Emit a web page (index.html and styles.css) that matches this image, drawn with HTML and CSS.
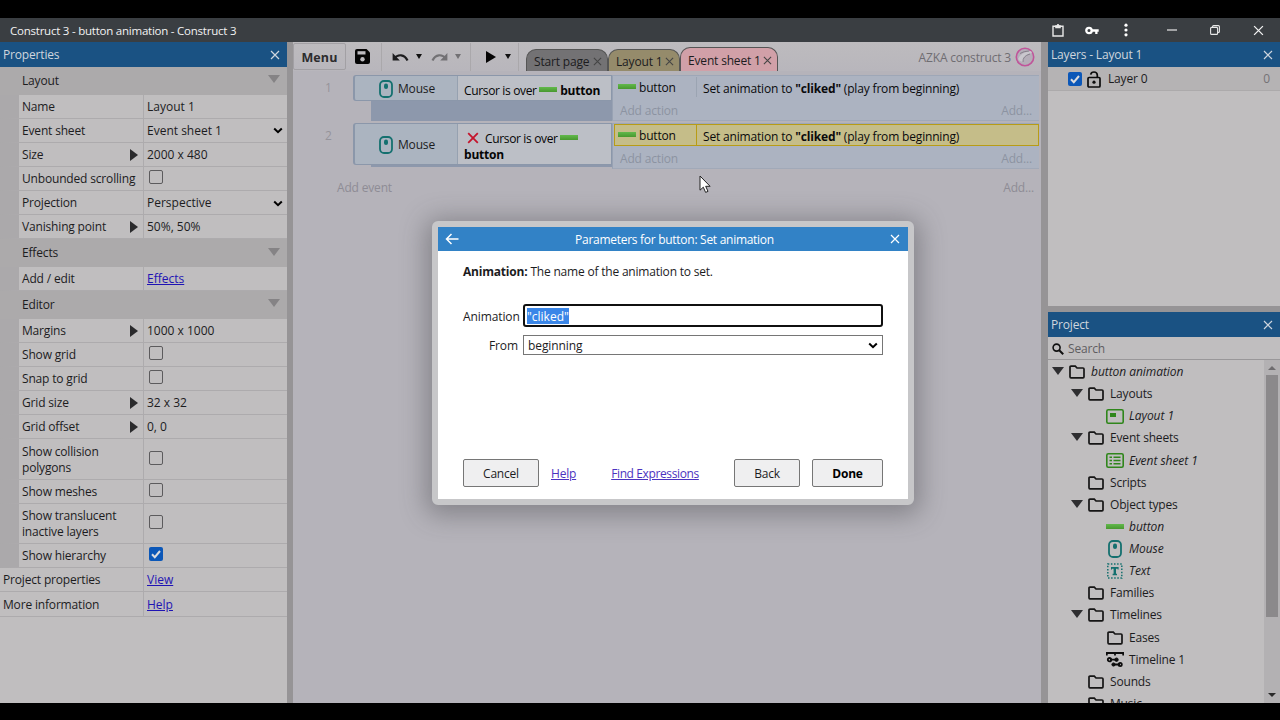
FILE: index.html
```html
<!DOCTYPE html>
<html lang="en">
<head>
<meta charset="UTF-8">
<title>Construct 3 - button animation - Construct 3</title>
<link rel="stylesheet" href="styles.css">
</head>
<body>
<svg width="0" height="0" class="defs">
  <symbol id="x" viewBox="0 0 10 10"><path d="M1 1l8 8M9 1l-8 8" fill="none" stroke="currentColor" stroke-width="1.2"/></symbol>
  <symbol id="folder" viewBox="0 0 16 14"><path d="M1 2.2v9.600q0 1 1 1h12q1 0 1-1V4q0-1-1-1H8L6.300 1.200H2q-1 0-1 1z" fill="none" stroke="currentColor" stroke-width="1.700"/></symbol>
  <symbol id="mouse" viewBox="0 0 14 18"><rect x="1" y="1" width="12" height="16" rx="4" fill="none" stroke="#14706f" stroke-width="1.800"/><rect x="5" y="3.500" width="4" height="5.500" rx="2" fill="#14706f"/></symbol>
  <symbol id="chev" viewBox="0 0 10 7"><path d="M1.200 1.500l3.800 3.700 3.800-3.700" fill="none" stroke="currentColor" stroke-width="2"/></symbol>
  <symbol id="undo" viewBox="0 0 17 10"><path d="M2 6.500C6 1.800 12.500 2 15.500 8.500" fill="none" stroke="currentColor" stroke-width="2.200"/><path d="M.6 1v7.500h7.200z" fill="currentColor"/></symbol>
  <symbol id="tick" viewBox="0 0 14 14"><path d="M3 7.300l2.800 2.900L11 4" fill="none" stroke="#dcdcde" stroke-width="2"/></symbol>
</svg>

<div class="titlebar">
  <span class="title">Construct 3 - button animation - Construct 3</span>
  <svg class="clip" width="12" height="13" viewBox="0 0 12 13"><path d="M1 2.200h10v9.800H1z" fill="none" stroke="#e8e8e8" stroke-width="1.400"/><path d="M3.200 1.300h1.600a1.200 1.200 0 0 1 2.400 0h1.600v3H3.200z" fill="#e8e8e8"/></svg>
  <svg class="key" width="14" height="9" viewBox="0 0 14 9"><circle cx="4" cy="4.500" r="2.700" fill="none" stroke="#fff" stroke-width="2.300"/><path d="M7 3.300h6.700v2.400h-1.200V8h-2.300V5.700H7z" fill="#fff"/></svg>
  <svg class="dots" width="4" height="14" viewBox="0 0 4 14" fill="#fff"><circle cx="2" cy="2.200" r="1.600"/><circle cx="2" cy="7" r="1.600"/><circle cx="2" cy="11.800" r="1.600"/></svg>
  <svg class="min" width="10" height="2"><path d="M0 1h10" stroke="#e8e8e8" stroke-width="1.200"/></svg>
  <svg class="max" width="10" height="10" viewBox="0 0 10 10" fill="none" stroke="#e8e8e8" stroke-width="1.100"><rect x=".6" y="2.400" width="7" height="7" rx="1"/><path d="M2.600 2.400V1.600q0-1 1-1h4.800q1 0 1 1v4.800q0 1-1 1h-.8"/></svg>
  <svg class="close" width="11" height="11"><use href="#x"/></svg>
</div>

<div class="app">
  <div class="props">
    <div class="head"><span>Properties</span><svg width="10" height="10"><use href="#x"/></svg></div>
    <div class="cat first">Layout<i></i></div>
    <div class="row"><div class="name">Name</div><div class="val">Layout 1</div></div>
    <div class="row"><div class="name">Event sheet</div><div class="val">Event sheet 1<svg class="sel" width="10" height="7"><use href="#chev"/></svg></div></div>
    <div class="row"><div class="name">Size<b></b></div><div class="val">2000 x 480</div></div>
    <div class="row"><div class="name">Unbounded scrolling</div><div class="val"><span class="check"></span></div></div>
    <div class="row"><div class="name">Projection</div><div class="val">Perspective<svg class="sel" width="10" height="7"><use href="#chev"/></svg></div></div>
    <div class="row"><div class="name">Vanishing point<b></b></div><div class="val">50%, 50%</div></div>
    <div class="cat">Effects<i></i></div>
    <div class="row"><div class="name">Add / edit</div><div class="val"><a>Effects</a></div></div>
    <div class="cat">Editor<i></i></div>
    <div class="row"><div class="name">Margins<b></b></div><div class="val">1000 x 1000</div></div>
    <div class="row"><div class="name">Show grid</div><div class="val"><span class="check"></span></div></div>
    <div class="row"><div class="name">Snap to grid</div><div class="val"><span class="check"></span></div></div>
    <div class="row"><div class="name">Grid size<b></b></div><div class="val">32 x 32</div></div>
    <div class="row"><div class="name">Grid offset<b></b></div><div class="val">0, 0</div></div>
    <div class="row tall"><div class="name">Show collision<br>polygons</div><div class="val"><span class="check"></span></div></div>
    <div class="row"><div class="name">Show meshes</div><div class="val"><span class="check"></span></div></div>
    <div class="row tall"><div class="name">Show translucent<br>inactive layers</div><div class="val"><span class="check"></span></div></div>
    <div class="row"><div class="name">Show hierarchy</div><div class="val"><span class="check on"><svg width="14" height="14"><use href="#tick"/></svg></span></div></div>
    <div class="row wide"><div class="name">Project properties</div><div class="val"><a>View</a></div></div>
    <div class="row wide"><div class="name">More information</div><div class="val"><a>Help</a></div></div>
  </div>

  <div class="main">
    <div class="toolbar">
      <div class="menu">Menu</div>
      <svg class="save" width="15" height="15" viewBox="0 0 15 15"><path d="M2 0h9.500L15 3.500V13q0 2-2 2H2q-2 0-2-2V2q0-2 2-2z" fill="#050505"/><path d="M2.500 2.200h8v3.300h-8z" fill="#bdbbbf"/><circle cx="7.500" cy="10.300" r="2.200" fill="#bdbbbf"/></svg>
      <div class="group g1">
        <svg width="17" height="10"><use href="#undo"/></svg><s></s>
        <svg class="redo" width="17" height="10"><use href="#undo"/></svg><s class="dim"></s>
      </div>
      <div class="group g2">
        <svg width="10" height="12"><path d="M0 0l10 6-10 6z" fill="#050505"/></svg><s></s>
      </div>
      <div class="tabs">
        <div class="tab start">Start page<svg width="9" height="9"><use href="#x"/></svg></div>
        <div class="tab lay">Layout 1<svg width="9" height="9"><use href="#x"/></svg></div>
        <div class="tab ev">Event sheet 1<svg width="9" height="9"><use href="#x"/></svg></div>
      </div>
      <span class="user">AZKA construct 3</span>
      <svg class="avatar" width="20" height="20" viewBox="0 0 20 20"><circle cx="10" cy="10" r="8.700" fill="#b5aeb9" stroke="#c0559a" stroke-width="1.600"/><path d="M3 12Q6 5 16 4l1 2Q9 7 8 15q-3 0-5-3z" fill="#c9c7cd"/><path d="M5 6.500q4-2.500 9-2.500M8 15q-.5-6 7-8" fill="none" stroke="#86808b" stroke-width="1"/></svg>
    </div>

    <div class="event">
      <div class="num">1</div>
      <div class="conds">
        <div class="cond">
          <div class="obj"><svg width="14" height="18"><use href="#mouse"/></svg>Mouse</div>
          <div class="text">Cursor is over <em></em> <strong>button</strong></div>
        </div>
      </div>
      <div class="actions">
        <div class="action"><div class="who"><em></em>button</div><div class="what">Set animation to <strong>"cliked"</strong> (play from beginning)</div></div>
        <div class="add"><span>Add action</span><span>Add...</span></div>
      </div>
    </div>
    <div class="event second">
      <div class="num">2</div>
      <div class="conds">
        <div class="cond">
          <div class="obj"><svg width="14" height="18"><use href="#mouse"/></svg>Mouse</div>
          <div class="text"><svg class="not" width="12" height="12" viewBox="0 0 10 10"><path d="M1 1l8 8M9 1l-8 8" stroke="#c4142c" stroke-width="1.500"/></svg>Cursor is over <em></em><br><strong>button</strong></div>
        </div>
      </div>
      <div class="actions">
        <div class="action picked"><div class="who"><em></em>button</div><div class="what">Set animation to <strong>"cliked"</strong> (play from beginning)</div></div>
        <div class="add"><span>Add action</span><span>Add...</span></div>
      </div>
    </div>
    <div class="addevent"><span>Add event</span><span>Add...</span></div>
  </div>

  <div class="side">
    <div class="layers">
      <div class="head"><span>Layers - Layout 1</span><svg width="10" height="10"><use href="#x"/></svg></div>
      <div class="layer">
        <span class="check on"><svg width="14" height="14"><use href="#tick"/></svg></span>
        <svg width="14" height="17" viewBox="0 0 14 17"><rect x="1" y="6.500" width="12" height="9.500" rx="1" fill="none" stroke="#0c0c0c" stroke-width="1.700"/><path d="M3.700 3.700Q4 1 7 1t3.300 3v2.500" fill="none" stroke="#0c0c0c" stroke-width="1.700"/><circle cx="7" cy="11.200" r="1.600" fill="#0c0c0c"/></svg>
        <span>Layer 0</span><span class="count">0</span>
      </div>
    </div>
    <div class="project">
      <div class="head"><span>Project</span><svg width="10" height="10"><use href="#x"/></svg></div>
      <div class="search"><svg width="12" height="12" viewBox="0 0 12 12"><circle cx="4.600" cy="4.600" r="3.500" fill="none" stroke="#111" stroke-width="1.600"/><path d="M7.200 7.200l4 4" stroke="#111" stroke-width="2"/></svg>Search</div>
      <div class="treewrap">
        <div class="tree">
          <div class="node l0"><u></u><svg width="16" height="14"><use href="#folder"/></svg><i>button animation</i></div>
          <div class="node l1"><u></u><svg width="16" height="14"><use href="#folder"/></svg>Layouts</div>
          <div class="node l2"><svg width="18" height="15" viewBox="0 0 18 15"><rect x=".8" y=".8" width="16.400" height="13.400" rx="1.500" fill="none" stroke="#2f861b" stroke-width="1.600"/><path d="M4 4h6v4H4z" fill="#2f861b"/></svg><i>Layout 1</i></div>
          <div class="node l1"><u></u><svg width="16" height="14"><use href="#folder"/></svg>Event sheets</div>
          <div class="node l2"><svg width="18" height="15" viewBox="0 0 18 15"><rect x=".8" y=".8" width="16.400" height="13.400" rx="1.500" fill="none" stroke="#2f861b" stroke-width="1.600"/><path d="M3.500 4.200h2.500M7.500 4.200h7M3.500 7.500h2.500M7.500 7.500h7M3.500 10.800h2.500M7.500 10.800h7" stroke="#2f861b" stroke-width="1.600"/></svg><i>Event sheet 1</i></div>
          <div class="node l1 leaf"><svg width="16" height="14"><use href="#folder"/></svg>Scripts</div>
          <div class="node l1"><u></u><svg width="16" height="14"><use href="#folder"/></svg>Object types</div>
          <div class="node l2"><em></em><i>button</i></div>
          <div class="node l2"><svg width="18" height="18"><use href="#mouse"/></svg><i>Mouse</i></div>
          <div class="node l2"><svg width="18" height="16" viewBox="0 0 18 16"><rect x="1.800" y="1" width="14" height="14" fill="none" stroke="#14706f" stroke-width="1.500" stroke-dasharray="1.500 1.600"/><path d="M5 4h7.600v2.600h-1V5.800h-1.600v5h1v1.400H6.600v-1.400h1v-5H6v.8H5z" fill="#14706f"/></svg><i>Text</i></div>
          <div class="node l1 leaf"><svg width="16" height="14"><use href="#folder"/></svg>Families</div>
          <div class="node l1"><u></u><svg width="16" height="14"><use href="#folder"/></svg>Timelines</div>
          <div class="node l2"><svg width="18" height="14"><use href="#folder"/></svg>Eases</div>
          <div class="node l2"><svg width="18" height="15" viewBox="0 0 18 15" fill="none" stroke="#0c0c0c"><path d="M.8 3.500V1h16.400v2.500M9 1v2.500" stroke-width="1.800"/><path d="M4 7.700h6M8 12.500h6" stroke-width="1.800"/><circle cx="3.500" cy="7.700" r="1.700" stroke-width="1.800"/><circle cx="10.500" cy="7.700" r="1.700" fill="#0c0c0c"/><circle cx="7.500" cy="12.500" r="1.600" fill="#0c0c0c"/><circle cx="14.200" cy="12.500" r="1.600" stroke-width="1.800"/></svg>Timeline 1</div>
          <div class="node l1 leaf"><svg width="16" height="14"><use href="#folder"/></svg>Sounds</div>
          <div class="node l1 leaf"><svg width="16" height="14"><use href="#folder"/></svg>Music</div>
        </div>
        <div class="scroll"><div class="up"></div><div class="thumb"></div><div class="down"></div></div>
      </div>
    </div>
  </div>
</div>

<div class="dialog">
  <div class="dhead">
    <svg width="14" height="12" viewBox="0 0 14 12"><path d="M13.500 6H1.500M6.500 1l-5 5 5 5" fill="none" stroke="#fff" stroke-width="1.500"/></svg>
    <span>Parameters for button: Set animation</span>
    <svg width="10" height="10"><use href="#x"/></svg>
  </div>
  <div class="dbody">
    <p><strong>Animation:</strong> The name of the animation to set.</p>
    <div class="field"><label>Animation</label><div class="input"><mark>"cliked"</mark></div></div>
    <div class="field"><label>From</label><div class="select">beginning<svg width="10" height="7"><use href="#chev"/></svg></div></div>
    <div class="buttons">
      <div class="btn cancel">Cancel</div>
      <a class="help">Help</a>
      <a class="find">Find Expressions</a>
      <div class="btn back">Back</div>
      <div class="btn done">Done</div>
    </div>
  </div>
</div>

<svg class="cursor" width="12" height="19" viewBox="0 0 12 19"><path d="M1 1v14.200l3.300-3 2.300 5.200 2.400-1-2.300-5.100h4.400z" fill="#fff" stroke="#222" stroke-width="1"/></svg>
</body>
</html>
```
FILE: styles.css
```css
* {
  box-sizing: border-box;
}
body {
  margin: 0;
  width: 1280px;
  height: 720px;
  padding: 18px 0 17px;
  background: #000;
  overflow: hidden;
  position: relative;
  font-family: "Open Sans", "Noto Sans", sans-serif;
  font-size: 12px;
  line-height: 16px;
  letter-spacing: -0.17px;
  color: #1c1c1e;
}
svg {
  flex: none;
}
.defs {
  position: absolute;
}
em {
  display: inline-block;
  flex: none;
  width: 18px;
  height: 5px;
  background: linear-gradient(#62b94c, #48982f);
}
a {
  color: #1f14b4;
  text-decoration: underline;
}
.titlebar {
  height: 24px;
  background: #3a3e42;
  color: #f2f2f2;
  display: flex;
  align-items: center;
  padding: 0 16px 0 10px;
}
.title {
  flex: 1;
  padding-top: 1px;
  font-size: 11.5px;
  letter-spacing: -0.23px;
}
.clip { margin-right: 21px; }
.key { margin-right: 25px; }
.dots { margin-right: 39px; }
.min { margin-right: 33px; }
.max { margin-right: 33px; }

.app {
  height: 661px;
  display: flex;
  background: #969496;
  overflow: hidden;
}
.head {
  height: 25px;
  background: #1a5283;
  color: #cfd6de;
  display: flex;
  align-items: center;
  justify-content: space-between;
  padding: 1px 7px 0 3px;
}

/* properties bar */
.props {
  width: 287px;
  background: #c0bebf;
  flex: none;
}
.cat {
  height: 27.6px;
  background: #acaaab;
  padding: 0 7px 0 22px;
  display: flex;
  align-items: center;
  justify-content: space-between;
}
.cat i {
  border: 6px solid transparent;
  border-top: 8px solid #858385;
  border-bottom: 0;
  margin-bottom: 3px;
}
.row {
  height: 24.15px;
  display: flex;
  border-left: 19px solid #aba9ab;
  border-bottom: 1px solid #adabad;
}
.row.tall {
  height: 40.3px;
}
.row.wide {
  border-left: 0;
}
.name {
  width: 125px;
  border-right: 1px solid #adabad;
  padding: 1px 5px 0 3px;
  display: flex;
  align-items: center;
  justify-content: space-between;
  white-space: nowrap;
}
.wide .name {
  width: 144px;
}
.name b {
  border: 6px solid transparent;
  border-left: 8px solid #2a2a2c;
  border-right: 0;
}
.val {
  flex: 1;
  display: flex;
  align-items: center;
  padding: 1px 0 0 3px;
  letter-spacing: 0;
}
.sel {
  margin: 0 4px 0 auto;
  color: #000;
}
.check {
  width: 14px;
  height: 14px;
  border: 1px solid #5c5b5d;
  border-radius: 2px;
  margin: 0 0 4px 2px;
}
.check.on {
  border: 0;
  background: #0b57b8;
}
.check svg {
  display: block;
}

/* editor */
.main {
  width: 748px;
  margin: 0 7px 0 6px;
  background: #b5b3ba;
  flex: none;
}
.toolbar {
  height: 29px;
  display: flex;
  align-items: center;
  background: linear-gradient(#bdbbbe, #b8b6bc);
}
.menu {
  width: 53px;
  height: 27px;
  border: 1px solid #a2a0a4;
  border-radius: 2px;
  text-align: center;
  line-height: 27px;
  font-size: 12.500px;
  font-weight: bold;
  letter-spacing: 0.1px;
  color: #2c2c2e;
  margin-right: 9px;
}
.group {
  height: 28px;
  border-left: 1px solid #aaa8ab;
  display: flex;
  align-items: center;
}
.g1 {
  margin-left: 11px;
  width: 89px;
  padding-left: 10px;
}
.g2 {
  width: 49px;
  border-right: 1px solid #aaa8ab;
  padding-left: 15px;
}
.group s {
  border: 3px solid transparent;
  border-top: 5px solid #111;
  border-bottom: 0;
  margin-left: 7px;
}
.g2 s {
  margin-left: 9px;
}
.redo {
  transform: scaleX(-1);
  margin-left: 9px;
  color: #727174;
}
.group s.dim {
  border-top-color: #727174;
}
.tabs {
  display: flex;
  align-items: flex-end;
  height: 29px;
  margin-left: 7px;
}
.tab {
  height: 22px;
  border: 1px solid #555;
  border-bottom: 0;
  border-radius: 10px 10px 0 0;
  display: flex;
  align-items: center;
  justify-content: space-between;
  padding: 2px 5px 0 7px;
  white-space: nowrap;
}
.tab svg {
  color: #444;
}
.start {
  width: 82px;
  background: #737274;
}
.lay {
  width: 72px;
  background: #958b6b;
}
.ev {
  width: 98px;
  height: 24px;
  background: #d1a0a8;
}
.user {
  margin-left: auto;
  color: #6f6d72;
  margin-right: 4px;
  padding-top: 2px;
}
.avatar {
  margin-right: 6px;
}
.event {
  display: flex;
  margin-top: 4px;
  height: 46px;
}
.event.second {
  margin-top: 2px;
}
.num {
  width: 60px;
  padding: 5px 0 0 32px;
  color: #95939b;
}
.conds {
  width: 259px;
  background: linear-gradient(#8d98ac, #8d98ac) 18px 0 no-repeat;
}
.cond {
  height: 26px;
  display: flex;
  background: #abb4c0;
  border: 1px solid #8b97aa;
  border-left-width: 2px;
  border-radius: 3px 0 0 3px;
}
.second .cond {
  height: 42px;
}
.second .conds {
  background-size: 100% 44px;
}
.obj {
  width: 103px;
  display: flex;
  align-items: center;
  justify-content: center;
  gap: 5px;
  padding: 1px 0 0 2px;
  border-right: 1px solid #96a1b0;
}
.text {
  flex: 1;
  background: #bcbfc6;
  padding: 7px 0 0 6px;
  color: #050505;
  white-space: nowrap;
  letter-spacing: -0.35px;
}
.text strong {
  letter-spacing: -0.2px;
}
.text em {
  vertical-align: 3px;
}
.not {
  vertical-align: -1px;
  margin: 0 6px 0 3px;
}
.actions {
  width: 427px;
  background: #acb3c1;
  border-left: 1px solid #98a2b3;
  border-top: 1px solid #9ea7b7;
  border-bottom: 1px solid #a1a9b8;
}
.action {
  height: 22px;
  display: flex;
  margin-left: 1px;
  border: 1px solid transparent;
  color: #0a0a0c;
}
.action.picked {
  background: #c5bd89;
  border-color: #b89c16;
}
.who {
  width: 82px;
  height: 20px;
  border-right: 1px solid #9ba4b2;
  display: flex;
  align-items: center;
  gap: 3px;
  padding: 2px 0 0 3px;
}
.who em {
  margin-bottom: 4px;
}
.picked .who {
  border-color: #b89c16;
}
.what {
  padding: 1px 0 0 6px;
  line-height: 21px;
}
.add {
  display: flex;
  justify-content: space-between;
  color: #8c93a2;
  padding: 5px 7px 0 7px;
}
.addevent {
  display: flex;
  justify-content: space-between;
  padding: 11px 7px 0 44px;
  color: #8e8c95;
}

/* right hand bars */
.side {
  flex: 1;
  display: flex;
  flex-direction: column;
  gap: 6px;
}
.layers {
  height: 264px;
  background: #c0bebf;
  flex: none;
}
.layer {
  height: 24px;
  background: #b5b3b4;
  border-bottom: 1px solid #acaaab;
  display: flex;
  align-items: center;
  padding: 1px 10px 0 20px;
}
.layer .check {
  margin: 0 5px 0 0;
}
.layer > svg {
  margin-right: 7px;
}
.count {
  margin-left: auto;
  color: #747276;
}
.project {
  flex: 1;
  background: #c0bebf;
  overflow: hidden;
}
.search {
  height: 23px;
  border-bottom: 1px solid #999799;
  display: flex;
  align-items: center;
  gap: 4px;
  padding: 2px 0 0 4px;
  color: #5f5d61;
}
.treewrap {
  display: flex;
  height: 343px;
}
.tree {
  flex: 1;
  padding-top: 1px;
}
.node {
  height: 22.130px;
  display: flex;
  align-items: center;
}
.node i {
  letter-spacing: -0.05px;
}
.node svg, .node em {
  margin-right: 6px;
}
.node svg {
  color: #151515;
}
.node u {
  border: 6px solid transparent;
  border-top: 8px solid #2e2e30;
  border-bottom: 0;
  margin-right: 5px;
  margin-bottom: 2px;
}
.l0 { padding-left: 4px; }
.l1 { padding-left: 23px; }
.l1.leaf { padding-left: 40px; }
.l2 { padding-left: 58px; }
.l2 svg, .l2 em {
  margin-right: 5px;
}
.scroll {
  width: 16px;
  background: #b3b1b3;
  padding: 0 2px;
}
.up, .down {
  height: 15px;
  display: flex;
  justify-content: center;
  align-items: center;
}
.up:before {
  content: "";
  border: 4px solid transparent;
  border-bottom: 4px solid #6e6c6f;
  border-top: 0;
}
.down:before {
  content: "";
  border: 4px solid transparent;
  border-top: 4px solid #2a2a2a;
  border-bottom: 0;
}
.thumb {
  height: 242px;
  background: #8b898b;
  margin-bottom: 70px;
}

/* parameters dialog */
.dialog {
  position: absolute;
  left: 432px;
  top: 221px;
  width: 482px;
  height: 284px;
  border: 6px solid #c7c7c9;
  border-radius: 6px;
  background: #fff;
  box-shadow: 0 4px 26px 6px rgba(60, 60, 64, 0.4);
  letter-spacing: -0.2px;
}
.dhead {
  height: 24px;
  background: #3282c6;
  color: #fff;
  display: flex;
  align-items: center;
  justify-content: space-between;
  padding: 0 8px 0 7px;
  font-weight: 500;
  letter-spacing: -0.28px;
}
.dhead span {
  padding-top: 1px;
}
.dbody {
  padding: 13px 25px 0;
}
.dbody p {
  margin: 0 0 24px;
}
.field {
  display: flex;
  align-items: center;
  margin-bottom: 8px;
}
.field label {
  width: 55px;
  text-align: right;
  margin-right: 5px;
  padding-top: 2px;
  letter-spacing: -0.1px;
}
.input {
  flex: 1;
  height: 23px;
  border: 2px solid #101010;
  border-radius: 3px;
  padding: 2px 2px;
}
mark {
  display: inline-block;
  height: 16px;
  line-height: 17px;
  background: #3a86e8;
  color: #fff;
  letter-spacing: 0;
}
.select {
  flex: 1;
  height: 20px;
  border: 1px solid #767676;
  padding: 1px 4px 0;
  display: flex;
  align-items: center;
  justify-content: space-between;
  letter-spacing: -0.1px;
}
.select svg {
  color: #000;
}
.buttons {
  display: flex;
  align-items: center;
  margin-top: 104px;
}
.buttons a {
  color: #4b32c0;
  padding-top: 2px;
}
.btn {
  height: 28px;
  border: 1px solid #767676;
  border-radius: 2px;
  background: #efeff0;
  text-align: center;
  line-height: 28px;
}
.cancel {
  width: 76px;
  margin-right: 12px;
}
.help {
  margin-right: 35px;
}
.find {
  letter-spacing: -0.38px;
}
.back {
  width: 66px;
  margin: 0 12px 0 auto;
}
.done {
  width: 71px;
  font-weight: bold;
  color: #000;
}
.cursor {
  position: absolute;
  left: 699px;
  top: 175px;
}
```
